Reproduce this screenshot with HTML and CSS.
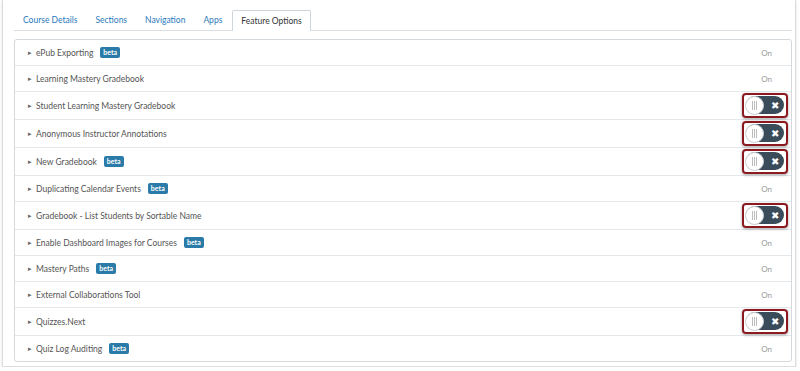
FILE: index.html
```html
<!DOCTYPE html>
<html lang="en">
<head>
  <meta charset="UTF-8">
  <title>Feature Options</title>
  <link rel="stylesheet" href="styles.css">
</head>
<body>

<div class="frame">
  <ul class="tabs">
    <li>Course Details</li>
    <li>Sections</li>
    <li>Navigation</li>
    <li>Apps</li>
    <li class="active">Feature Options</li>
  </ul>

  <div class="features">
    <div class="feature"><span class="name">ePub Exporting</span><span class="beta">beta</span><span class="state">On</span></div>
    <div class="feature"><span class="name">Learning Mastery Gradebook</span><span class="state">On</span></div>
    <div class="feature tall"><span class="name">Student Learning Mastery Gradebook</span><span class="mark"><span class="switch"><span class="knob"></span><span class="x">&#10006;</span></span></span></div>
    <div class="feature tall"><span class="name">Anonymous Instructor Annotations</span><span class="mark"><span class="switch"><span class="knob"></span><span class="x">&#10006;</span></span></span></div>
    <div class="feature tall"><span class="name">New Gradebook</span><span class="beta">beta</span><span class="mark"><span class="switch"><span class="knob"></span><span class="x">&#10006;</span></span></span></div>
    <div class="feature"><span class="name">Duplicating Calendar Events</span><span class="beta">beta</span><span class="state">On</span></div>
    <div class="feature tall"><span class="name">Gradebook - List Students by Sortable Name</span><span class="mark"><span class="switch"><span class="knob"></span><span class="x">&#10006;</span></span></span></div>
    <div class="feature"><span class="name">Enable Dashboard Images for Courses</span><span class="beta">beta</span><span class="state">On</span></div>
    <div class="feature"><span class="name">Mastery Paths</span><span class="beta">beta</span><span class="state">On</span></div>
    <div class="feature"><span class="name">External Collaborations Tool</span><span class="state">On</span></div>
    <div class="feature tall"><span class="name">Quizzes.Next</span><span class="mark"><span class="switch"><span class="knob"></span><span class="x">&#10006;</span></span></span></div>
    <div class="feature"><span class="name">Quiz Log Auditing</span><span class="beta">beta</span><span class="state">On</span></div>
  </div>
</div>

</body>
</html>
```

FILE: styles.css
```css
body {
  margin: 0;
  background-color: #fff;
  font-family: Lato, "Open Sans", sans-serif;
}

.frame {
  margin-left: 2px;
  width: 794px;
  height: 367px;
  padding: 0 3px 0 11px;
  border: 1px solid #dcdcdc;
  border-top: none;
  box-shadow: 0 1px 3px rgba(0,0,0,0.12);
  box-sizing: border-box;
}

.tabs {
  list-style: none;
  margin: 0;
  padding: 10px 0 0 0;
  display: flex;
  border-bottom: 1px solid #d8dee2;
  height: 20px;
}

.tabs li {
  padding: 0 9px;
  font-size: 8.5px;
  line-height: 21px;
  color: #2b7abc;
}

.tabs li.active {
  margin-left: 1px;
  padding: 0 8px;
  color: #333;
  background-color: #fff;
  border: 1px solid #cfd6db;
  border-bottom: none;
  border-radius: 2px 2px 0 0;
  margin-bottom: -1px;
  line-height: 21px;
}

.features {
  margin-top: 8px;
  border: 1px solid #d3d9dd;
  border-radius: 3px;
}

.feature {
  display: flex;
  align-items: center;
  height: 25px;
  padding: 0 19px 0 13px;
  border-top: 1px solid #e4e8eb;
  font-size: 8.5px;
  color: #555;
}

.feature:first-child {
  border-top: none;
}

.feature.tall {
  height: 27px;
  padding-right: 3px;
}

.name::before {
  content: "\25B8";
  font-size: 7px;
  color: #666;
  margin-right: 4px;
  position: relative;
  top: -1px;
}

.beta {
  margin-left: 7px;
  background-color: #2a7ba7;
  color: #fff;
  font-size: 7px;
  font-weight: bold;
  line-height: 11px;
  padding: 0 3px;
  border-radius: 2px;
}

.state {
  margin-left: auto;
  color: #9a9a9a;
  font-size: 8px;
}

.mark {
  margin-left: auto;
  display: flex;
  padding: 1px 2px 2px 2px;
  border: 2px solid #8a1a20;
  border-radius: 4px;
  box-shadow: 0 1px 3px rgba(0,0,0,0.35);
}

.switch {
  width: 38px;
  height: 18px;
  border-radius: 9px;
  background-color: #3a4c59;
  display: flex;
  align-items: center;
  justify-content: space-between;
}

.knob {
  width: 19px;
  height: 19px;
  margin-left: -1px;
  border-radius: 50%;
  background: #fff linear-gradient(90deg, transparent 7px, #bbb 7px, #bbb 8px, transparent 8px, transparent 9px, #bbb 9px, #bbb 10px, transparent 10px, transparent 11px, #bbb 11px, #bbb 12px, transparent 12px) no-repeat center / 19px 9px;
  border: 1px solid #c8cdd1;
  box-sizing: border-box;
}

.x {
  color: #fff;
  font-size: 10px;
  margin-right: 5px;
}
```
